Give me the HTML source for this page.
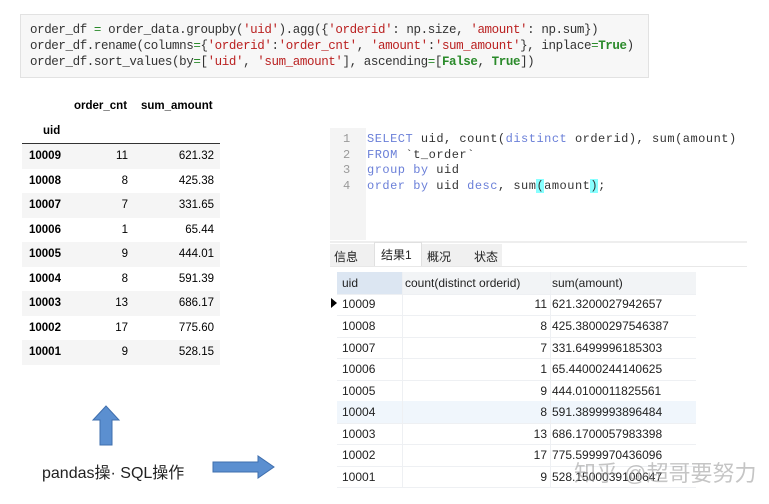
<!DOCTYPE html><html><head><meta charset="utf-8"><style>
body{margin:0;width:769px;height:504px;background:#fff;position:relative;overflow:hidden;font-family:"Liberation Sans","Noto Sans CJK SC",sans-serif}
.a{position:absolute;white-space:nowrap}
.code{left:20px;top:14px;width:627px;height:62px;background:#f7f7f7;border:1px solid #e2e2e2;font-family:"Liberation Mono","Noto Sans CJK SC",monospace;font-size:12.5px;color:#333}
.code div{position:absolute;left:9px;letter-spacing:-0.4px}
.s{color:#ba2121}.g{color:#2a8a2a;font-weight:bold}.o{color:#2a8a2a}
.pt{font-size:11.5px;color:#000;font-weight:bold}
.pr{position:absolute;left:22px;width:198px;height:24.5px;font-size:11.5px}
.pr span{position:absolute;top:6px}
.sql{font-family:"Liberation Mono",monospace;font-size:12px;letter-spacing:0.5px}
.gr{position:absolute;left:337px;width:359px;height:21.5px;font-size:12px;color:#222;border-bottom:1px solid #eef0f3}
.gr span{position:absolute;top:4px}
</style></head><body>
<div class="a code">
<div style="top:8px">order_df <span class="o">=</span> order_data.groupby(<span class="s">'uid'</span>).agg({<span class="s">'orderid'</span>: np.size, <span class="s">'amount'</span>: np.sum})</div>
<div style="top:24px">order_df.rename(columns<span class="o">=</span>{<span class="s">'orderid'</span>:<span class="s">'order_cnt'</span>, <span class="s">'amount'</span>:<span class="s">'sum_amount'</span>}, inplace<span class="o">=</span><span class="g">True</span>)</div>
<div style="top:40px">order_df.sort_values(by<span class="o">=</span>[<span class="s">'uid'</span>, <span class="s">'sum_amount'</span>], ascending<span class="o">=</span>[<span class="g">False</span>, <span class="g">True</span>])</div>
</div>
<div class="a pt" style="left:74px;top:100px">order_cnt</div>
<div class="a pt" style="left:141px;top:100px">sum_amount</div>
<div class="a pt" style="left:43px;top:125px">uid</div>
<div class="a" style="left:22px;top:143px;width:198px;height:1px;background:#333"></div>
<div class="pr" style="top:144px;background:#f5f5f5"><span style="left:7px;font-weight:bold">10009</span><span style="right:92px">11</span><span style="right:6px">621.32</span></div>
<div class="pr" style="top:168.5px"><span style="left:7px;font-weight:bold">10008</span><span style="right:92px">8</span><span style="right:6px">425.38</span></div>
<div class="pr" style="top:193px;background:#f5f5f5"><span style="left:7px;font-weight:bold">10007</span><span style="right:92px">7</span><span style="right:6px">331.65</span></div>
<div class="pr" style="top:217.5px"><span style="left:7px;font-weight:bold">10006</span><span style="right:92px">1</span><span style="right:6px">65.44</span></div>
<div class="pr" style="top:242px;background:#f5f5f5"><span style="left:7px;font-weight:bold">10005</span><span style="right:92px">9</span><span style="right:6px">444.01</span></div>
<div class="pr" style="top:266.5px"><span style="left:7px;font-weight:bold">10004</span><span style="right:92px">8</span><span style="right:6px">591.39</span></div>
<div class="pr" style="top:291px;background:#f5f5f5"><span style="left:7px;font-weight:bold">10003</span><span style="right:92px">13</span><span style="right:6px">686.17</span></div>
<div class="pr" style="top:315.5px"><span style="left:7px;font-weight:bold">10002</span><span style="right:92px">17</span><span style="right:6px">775.60</span></div>
<div class="pr" style="top:340px;background:#f5f5f5"><span style="left:7px;font-weight:bold">10001</span><span style="right:92px">9</span><span style="right:6px">528.15</span></div>

<div class="a" style="left:330px;top:128px;width:36px;height:112px;background:#f4f4f4"></div>
<div class="a sql" style="left:343px;top:132px;color:#999;line-height:15.5px;letter-spacing:0">1<br>2<br>3<br>4</div>
<div class="a sql" style="left:367px;top:132px;line-height:15.5px;color:#333"><span style="color:#6a7fd8">SELECT</span> uid, count(<span style="color:#6a7fd8">distinct</span> orderid), sum(amount)<br><span style="color:#6a7fd8">FROM</span> `t_order`<br><span style="color:#6a7fd8">group by</span> uid<br><span style="color:#6a7fd8">order by</span> uid <span style="color:#6a7fd8">desc</span>, sum<span style="background:#8ff">(</span>amount<span style="background:#8ff">)</span>;</div>
<div class="a" style="left:330px;top:241px;width:417px;height:2px;background:#eee"></div>
<div class="a" style="left:330px;top:244px;width:172px;height:22px;background:#f0f0f0"></div>
<div class="a" style="left:374px;top:242px;width:46px;height:24px;background:#fff;border:1px solid #e0e0e0;border-bottom:none"></div>
<div class="a" style="left:334px;top:248px;font-size:12px;color:#222">信息</div>
<div class="a" style="left:381px;top:246px;font-size:12px;color:#222">结果1</div>
<div class="a" style="left:427px;top:248px;font-size:12px;color:#222">概况</div>
<div class="a" style="left:474px;top:248px;font-size:12px;color:#222">状态</div>
<div class="a" style="left:330px;top:266px;width:417px;height:1px;background:#e8e8e8"></div>
<div class="gr" style="top:272px;background:#f2f4f6"><span style="left:0;top:0;width:65px;height:21.5px;background:#dce6f2"></span><span style="left:5px">uid</span><span style="left:68px">count(distinct orderid)</span><span style="left:215px">sum(amount)</span></div>
<div class="a" style="left:331px;top:298px;width:0;height:0;border-left:6px solid #000;border-top:5px solid transparent;border-bottom:5px solid transparent"></div>
<div class="gr" style="top:293px"><span style="left:5px">10009</span><span style="right:149px">11</span><span style="left:215px">621.3200027942657</span></div>
<div class="gr" style="top:315px"><span style="left:5px">10008</span><span style="right:149px">8</span><span style="left:215px">425.38000297546387</span></div>
<div class="gr" style="top:336.5px"><span style="left:5px">10007</span><span style="right:149px">7</span><span style="left:215px">331.6499996185303</span></div>
<div class="gr" style="top:358px"><span style="left:5px">10006</span><span style="right:149px">1</span><span style="left:215px">65.44000244140625</span></div>
<div class="gr" style="top:379.5px"><span style="left:5px">10005</span><span style="right:149px">9</span><span style="left:215px">444.0100011825561</span></div>
<div class="gr" style="top:401px;background:#f0f6fc"><span style="left:5px">10004</span><span style="right:149px">8</span><span style="left:215px">591.3899993896484</span></div>
<div class="gr" style="top:422.5px"><span style="left:5px">10003</span><span style="right:149px">13</span><span style="left:215px">686.1700057983398</span></div>
<div class="gr" style="top:444px"><span style="left:5px">10002</span><span style="right:149px">17</span><span style="left:215px">775.5999970436096</span></div>
<div class="gr" style="top:465.5px"><span style="left:5px">10001</span><span style="right:149px">9</span><span style="left:215px">528.1500039100647</span></div>
<div class="a" style="left:402px;top:272px;width:1px;height:215px;background:#eef0f3"></div>
<div class="a" style="left:550px;top:272px;width:1px;height:215px;background:#eef0f3"></div>
<div class="a" style="left:574px;top:456px;font-size:22px;color:rgba(150,150,150,0.55)">知乎 @超哥要努力</div>

<svg class="a" style="left:90px;top:403px" width="32" height="44"><path d="M10 42V17H3L16 3L29 17H22V42Z" fill="#5b8fd0" stroke="#3f6fae"/></svg>
<svg class="a" style="left:211px;top:454px" width="66" height="26"><path d="M2 8H47V2L63 13L47 24V18H2Z" fill="#5b8fd0" stroke="#3f6fae"/></svg>
<div class="a" style="left:42px;top:459px;font-size:16px;color:#222">pandas操· SQL操作</div>
</body></html>
